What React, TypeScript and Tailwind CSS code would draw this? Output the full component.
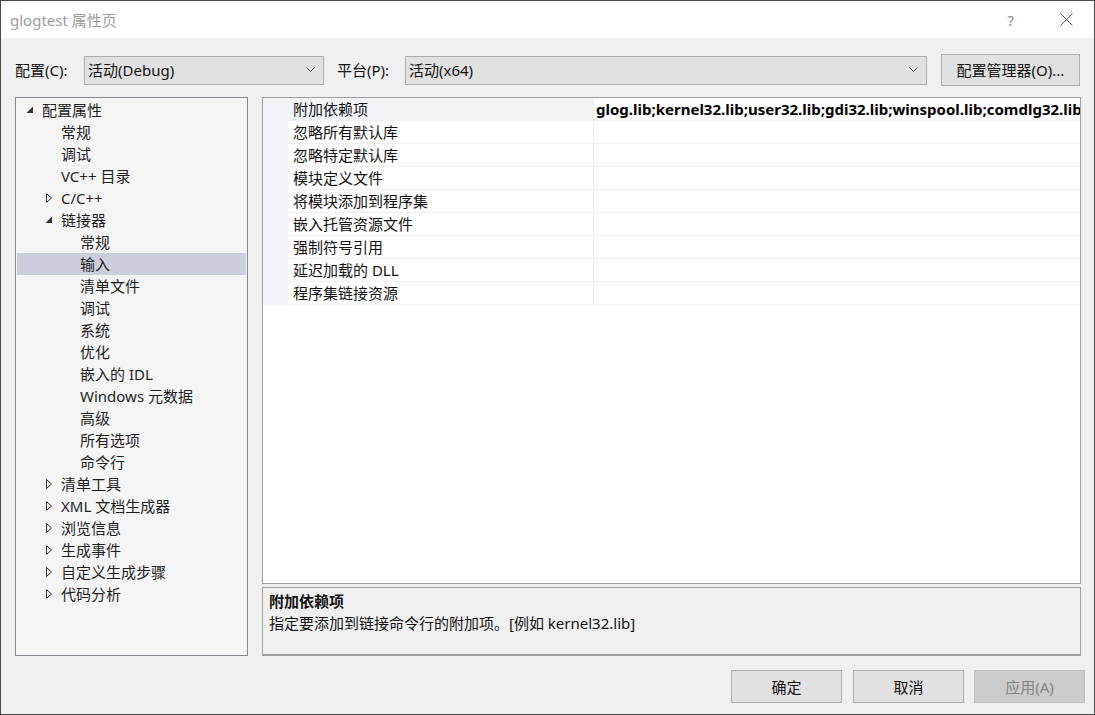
import React from "react";

type TreeItem = {
  label: string;
  level: number;
  expander?: "open" | "closed";
  selected?: boolean;
};

const tree: TreeItem[] = [
  { label: "配置属性", level: 0, expander: "open" },
  { label: "常规", level: 1 },
  { label: "调试", level: 1 },
  { label: "VC++ 目录", level: 1 },
  { label: "C/C++", level: 1, expander: "closed" },
  { label: "链接器", level: 1, expander: "open" },
  { label: "常规", level: 2 },
  { label: "输入", level: 2, selected: true },
  { label: "清单文件", level: 2 },
  { label: "调试", level: 2 },
  { label: "系统", level: 2 },
  { label: "优化", level: 2 },
  { label: "嵌入的 IDL", level: 2 },
  { label: "Windows 元数据", level: 2 },
  { label: "高级", level: 2 },
  { label: "所有选项", level: 2 },
  { label: "命令行", level: 2 },
  { label: "清单工具", level: 1, expander: "closed" },
  { label: "XML 文档生成器", level: 1, expander: "closed" },
  { label: "浏览信息", level: 1, expander: "closed" },
  { label: "生成事件", level: 1, expander: "closed" },
  { label: "自定义生成步骤", level: 1, expander: "closed" },
  { label: "代码分析", level: 1, expander: "closed" },
];

const props = [
  "附加依赖项",
  "忽略所有默认库",
  "忽略特定默认库",
  "模块定义文件",
  "将模块添加到程序集",
  "嵌入托管资源文件",
  "强制符号引用",
  "延迟加载的 DLL",
  "程序集链接资源",
];

const indent = ["pl-[6px]", "pl-[25px]", "pl-[44px]"];

function Expander({ kind }: { kind?: "open" | "closed" }) {
  return (
    <span className="flex h-full w-[19px] items-center">
      {kind === "open" && (
        <svg width="10" height="10" viewBox="0 0 10 10" className="ml-[2px]">
          <polygon points="8,1.5 8,8 1.5,8" fill="#333" />
        </svg>
      )}
      {kind === "closed" && (
        <svg width="10" height="12" viewBox="0 0 10 12" className="ml-[3px]">
          <polygon points="1.5,1.5 6.5,6 1.5,10.5" fill="none" stroke="#333" strokeWidth="1" />
        </svg>
      )}
    </span>
  );
}

function Combo({ text, width }: { text: string; width: string }) {
  return (
    <div
      className={`${width} flex h-[29px] shrink-0 items-center justify-between border border-[#adadad] bg-[#e1e1e1] pl-[3px] pr-[8px]`}
    >
      <span>{text}</span>
      <svg width="9" height="6" viewBox="0 0 9 6">
        <polyline points="0.5,0.5 4.5,4.5 8.5,0.5" fill="none" stroke="#555" strokeWidth="1" />
      </svg>
    </div>
  );
}

export default function App() {
  return (
    <div className="flex h-[715px] w-[1095px] flex-col border border-[#4a4a4a] bg-[#f0f0f0] font-['Noto_Sans','Noto_Sans_CJK_SC',sans-serif] text-[15px] leading-[20px] text-[#111]">
      {/* title bar */}
      <div className="flex h-[37px] items-center bg-white pl-[9px] pr-[21px] text-[15px] text-[#9c9c9c]">
        <span className="flex-1">glogtest 属性页</span>
        <span className="mr-[46px] text-[15px] text-[#888]">?</span>
        <svg width="13" height="13" viewBox="0 0 13 13">
          <path d="M0.5 0.5 L12.5 12.5 M12.5 0.5 L0.5 12.5" stroke="#555" strokeWidth="1" />
        </svg>
      </div>

      <div className="flex flex-1 flex-col px-[14px] pr-[13px] pt-[16px]">
        {/* config row */}
        <div className="flex h-[32px] items-center">
          <span className="w-[69px] shrink-0">配置(C):</span>
          <Combo text="活动(Debug)" width="w-[240px]" />
          <span className="ml-[13px] w-[68px] shrink-0">平台(P):</span>
          <Combo text="活动(x64)" width="w-[522px]" />
          <button className="ml-[14px] h-[32px] w-[139px] shrink-0 border border-[#adadad] bg-[#e1e1e1] text-[#111]">
            配置管理器(O)...
          </button>
        </div>

        {/* main */}
        <div className="mt-[11px] flex h-[559px] gap-[14px]">
          {/* tree */}
          <div className="w-[233px] shrink-0 border border-[#828790] bg-[#f5f5f5] pt-[1px]">
            {tree.map((t, i) => (
              <div
                key={i}
                className={`mx-px flex h-[22px] items-center text-[#1e1e1e] ${indent[t.level]} ${
                  t.selected ? "bg-[#cccedb]" : ""
                }`}
              >
                <Expander kind={t.expander} />
                <span className="whitespace-nowrap">{t.label}</span>
              </div>
            ))}
          </div>

          {/* right side */}
          <div className="flex min-w-0 flex-1 flex-col gap-[3px]">
            <div className="flex h-[487px] flex-col border border-[#a0a0a0] bg-white">
              {props.map((p, i) => (
                <div key={i} className="flex h-[23px]">
                  <div className="w-[25px] shrink-0 bg-[#f2f4f8]" />
                  <div
                    className={`flex w-[305px] shrink-0 items-center border-b border-[#f0f0f0] pl-[5px] ${
                      i === 0 ? "bg-[#f2f4f8]" : ""
                    }`}
                  >
                    {p}
                  </div>
                  <div className="flex min-w-0 flex-1 items-center overflow-hidden whitespace-nowrap border-b border-l border-[#f0f0f0] pl-[2px] font-bold text-black">
                    {i === 0 ? "glog.lib;kernel32.lib;user32.lib;gdi32.lib;winspool.lib;comdlg32.lib" : ""}
                  </div>
                </div>
              ))}
            </div>
            <div className="flex h-[69px] flex-col border border-[#a0a0a0] border-b-2 bg-[#f0f0f0] px-[6px] pt-[2px]">
              <span className="h-[22px] font-bold leading-[22px]">附加依赖项</span>
              <span className="leading-[22px]">指定要添加到链接命令行的附加项。[例如 kernel32.lib]</span>
            </div>
          </div>
        </div>

        {/* buttons */}
        <div className="mr-[-4px] mt-[14px] flex justify-end gap-[11px]">
          <button className="h-[33px] w-[111px] border border-[#adadad] bg-[#e1e1e1] text-[#111]">确定</button>
          <button className="h-[33px] w-[111px] border border-[#adadad] bg-[#e1e1e1] text-[#111]">取消</button>
          <button className="-ml-px h-[33px] w-[111px] border border-[#bfbfbf] bg-[#cccccc] text-[#838383]">
            应用(A)
          </button>
        </div>
      </div>
    </div>
  );
}
